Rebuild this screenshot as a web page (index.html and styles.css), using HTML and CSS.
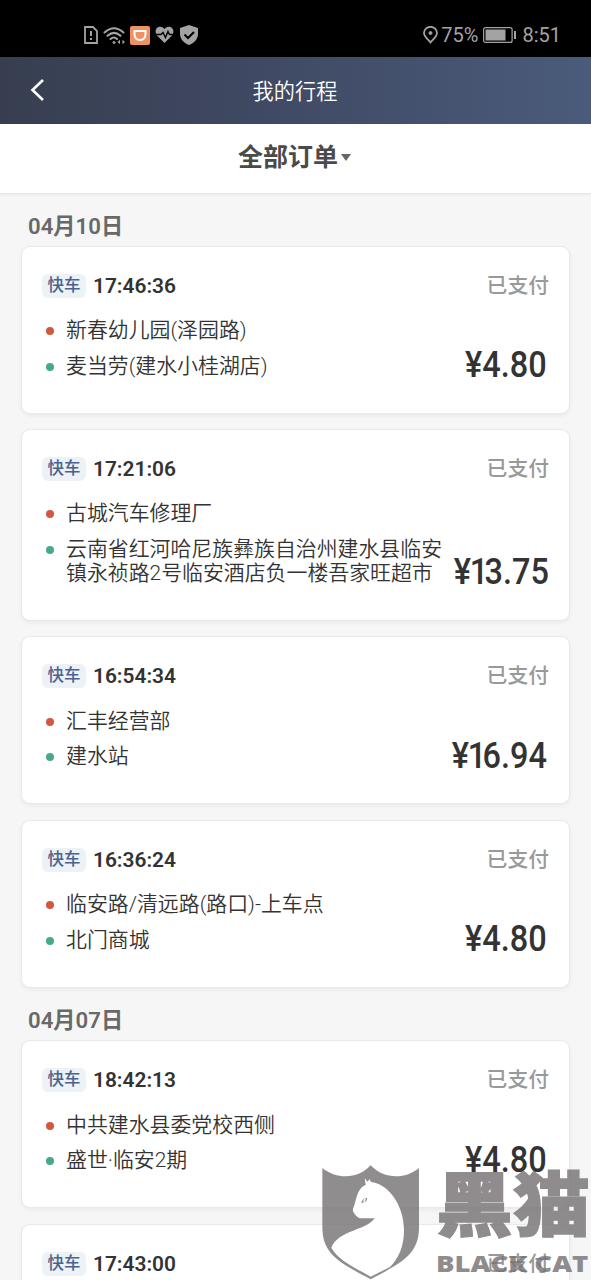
FILE: index.html
```
<!DOCTYPE html>
<html lang="zh-CN">
<head>
    <meta charset="UTF-8">
    <meta name="viewport" content="width=device-width, initial-scale=1.0">
    <title>我的行程</title>
    <link rel="stylesheet" href="styles.css">
</head>
<body>
    <div class="status-bar">
        <div class="status-left">
            <svg width="14" height="18" viewBox="0 0 14 18" fill="none" stroke="#a3a3a3" stroke-width="1.8"><path d="M1 1h8l4 4v12H1z"/><path d="M7 5v5M7 12v2" stroke-width="2"/></svg>
            <svg class="wifi" width="23" height="19" viewBox="0 0 23 19" fill="none" stroke="#a3a3a3" stroke-width="2" stroke-linecap="round"><path d="M1.500 6.500Q11-2 20.500 6.500M4.500 9.800Q11 4 17.500 9.800M7.500 13Q11 10 14 13"/><circle cx="11" cy="16.500" r="1" fill="#a3a3a3" stroke-width="1"/><path d="M14.500 16l2.500-2.300v4.600zM22 16l-2.500-2.300v4.600z" fill="#a3a3a3" stroke="none"/></svg>
            <svg class="didi" width="20" height="19" viewBox="0 0 20 19"><rect width="20" height="19" rx="2" fill="#f29160"/><path d="M4.500 5h11v2.500c0 4-2 6.500-5.500 6.500s-5.500-2.500-5.500-6.500z" fill="none" stroke="#fff" stroke-width="2"/></svg>
            <svg class="heart" width="19" height="18" viewBox="0 0 19 18"><path d="M9.500 17L2 9.500C-2.500 3 5-2.500 9.500 3 14-2.500 21.500 3 17 9.500z" fill="#a3a3a3"/><path d="M0 8.500h6l2-2 2.500 5 2.500-6 1.500 3H19" fill="none" stroke="#000" stroke-width="1.400"/></svg>
            <svg class="guard" width="18" height="20" viewBox="0 0 18 20"><path d="M9 0l9 3v6c0 5-4 9-9 11-5-2-9-6-9-11V3z" fill="#a3a3a3"/><path d="M4.500 9.500L8 13l6-6" fill="none" stroke="#000" stroke-width="2"/></svg>
        </div>
        <div class="status-right">
            <svg class="pin" width="15" height="18" viewBox="0 0 15 18" fill="none" stroke="#a3a3a3" stroke-width="1.800"><path d="M7.500 16.500C5 13.500 1 10.500 1 7a6.500 6.200 0 0 1 13 0c0 3.500-4 6.500-6.500 9.500z"/><circle cx="7.500" cy="7" r="1.500" fill="#a3a3a3" stroke-width="1"/></svg>
            <span class="percent">75%</span>
            <svg class="battery" width="34" height="16" viewBox="0 0 34 16"><rect x=".6" y=".6" width="28.500" height="14.800" rx="2" fill="none" stroke="#a3a3a3" stroke-width="1.200"/><rect x="2.500" y="2.500" width="20" height="11" fill="#a3a3a3"/><path d="M32 4v8" stroke="#a3a3a3" stroke-width="2"/></svg>
            <span class="clock">8:51</span>
        </div>
    </div>

    <div class="navbar">
        <svg class="back" width="15" height="22" viewBox="0 0 15 22" fill="none" stroke="#fff" stroke-width="2.600"><path d="M13 1L2.500 11 13 21"/></svg>
        <h1 class="title">我的行程</h1>
    </div>

    <div class="filter">
        <span>全部订单</span><i class="arrow"></i>
    </div>

    <div class="orders">
        <h2 class="date">04月10日</h2>

        <div class="card">
            <div class="card-head"><span class="tag">快车</span><span class="time">17:46:36</span><span class="state">已支付</span></div>
            <div class="card-body">
                <ul class="places">
                    <li class="from">新春幼儿园(泽园路)</li>
                    <li class="to">麦当劳(建水小桂湖店)</li>
                </ul>
                <div class="price">¥4.80</div>
            </div>
        </div>

        <div class="card">
            <div class="card-head"><span class="tag">快车</span><span class="time">17:21:06</span><span class="state">已支付</span></div>
            <div class="card-body">
                <ul class="places">
                    <li class="from">古城汽车修理厂</li>
                    <li class="to">云南省红河哈尼族彝族自治州建水县临安<br>镇永祯路2号临安酒店负一楼吾家旺超市</li>
                </ul>
                <div class="price">¥<span class="one">1</span>3.75</div>
            </div>
        </div>

        <div class="card">
            <div class="card-head"><span class="tag">快车</span><span class="time">16:54:34</span><span class="state">已支付</span></div>
            <div class="card-body">
                <ul class="places">
                    <li class="from">汇丰经营部</li>
                    <li class="to">建水站</li>
                </ul>
                <div class="price">¥<span class="one">1</span>6.94</div>
            </div>
        </div>

        <div class="card">
            <div class="card-head"><span class="tag">快车</span><span class="time">16:36:24</span><span class="state">已支付</span></div>
            <div class="card-body">
                <ul class="places">
                    <li class="from">临安路/清远路(路口)-上车点</li>
                    <li class="to">北门商城</li>
                </ul>
                <div class="price">¥4.80</div>
            </div>
        </div>

        <h2 class="date">04月07日</h2>

        <div class="card">
            <div class="card-head"><span class="tag">快车</span><span class="time">18:42:13</span><span class="state">已支付</span></div>
            <div class="card-body">
                <ul class="places">
                    <li class="from">中共建水县委党校西侧</li>
                    <li class="to">盛世·临安2期</li>
                </ul>
                <div class="price">¥4.80</div>
            </div>
        </div>

        <div class="card">
            <div class="card-head"><span class="tag">快车</span><span class="time">17:43:00</span><span class="state">已支付</span></div>
        </div>
    </div>

    <div class="watermark">
        <svg class="shield" width="98" height="115" viewBox="66 104 294 345">
            <path d="M67 113C110 148 175 147 212 105C250 147 315 148 357 113V290C357 370 310 395 212 447C115 395 67 370 67 290Z" fill="#787476" fill-opacity=".82"/>
            <path d="M194 143L202 154L209 147L213 155C262 160 312 220 312 300C312 350 295 385 270 410L212 439C165 412 115 390 94 352C115 300 200 300 224 264H180C170 260 156 245 159 235C168 220 168 175 197 164Z" fill="#fff"/>
            <path d="M184 218q3-15 17-16q2 14-17 16z" fill="#918e8f"/><path d="M195 204l-3 12" stroke="#fff" stroke-width="5"/>
        </svg>
        <div class="brand">
            <div class="brand-cn">黑猫</div>
            <div class="brand-en">BLACK CAT</div>
        </div>
    </div>
</body>
</html>
```
FILE: styles.css
```
* {
    box-sizing: border-box;
}

body {
    margin: 0;
    height: 1280px;
    overflow: hidden;
    position: relative;
    background: #f6f6f6;
    color: #333;
    font-family: Roboto, "Noto Sans CJK SC", sans-serif;
}

.status-bar {
    height: 57px;
    padding: 13px 30px 0 84px;
    display: flex;
    justify-content: space-between;
    align-items: center;
    background: #000;
    color: #a3a3a3;
    font-size: 20px;
}

.status-left,
.status-right {
    display: flex;
    align-items: center;
}

.wifi {
    margin-left: 5px;
}

.didi {
    margin-left: 4px;
}

.heart {
    margin-left: 5px;
}

.guard {
    margin-left: 6px;
}

.percent {
    margin-left: 3px;
}

.battery {
    margin: 0 5px;
}

.navbar {
    height: 67px;
    padding: 0 30px 2px;
    display: flex;
    align-items: center;
    background: linear-gradient(90deg, #373e50, #3f4861 40%, #4a5b7b);
    color: #fff;
}

.title {
    flex: 1;
    margin: 0 16px 0 0;
    text-align: center;
    font-size: 21.2px;
    font-weight: 350;
}

.filter {
    height: 70px;
    padding: 0 2px 7px 0;
    display: flex;
    justify-content: center;
    align-items: center;
    background: #fff;
    border-bottom: 1px solid #e9e9e9;
    box-shadow: 0 1px 3px rgba(0, 0, 0, 0.06);
    font-size: 25px;
    font-weight: 700;
    color: #4a4a4a;
}

.arrow {
    margin: 5px 0 0 3px;
    border: 5.5px solid transparent;
    border-top: 7px solid #666;
    border-bottom: 0;
}

.orders {
    padding: 0 21px;
}

.date {
    height: 37px;
    margin: 14.7px 0 0 7px;
    line-height: 35px;
    font-size: 22.2px;
    font-weight: 600;
    color: #686868;
}

.card {
    margin-bottom: 15.6px;
    padding: 27px 20px 34.1px;
    background: #fff;
    border: 1px solid #e9e9e9;
    border-radius: 9px;
    box-shadow: 0 2px 4px rgba(0, 0, 0, 0.05);
}

.card-head {
    height: 24px;
    display: flex;
    align-items: center;
}

.tag {
    width: 44px;
    height: 24px;
    border-radius: 6px;
    background: #edf2f7;
    text-align: center;
    line-height: 23px;
    font-size: 16.5px;
    font-weight: 500;
    color: #4a628f;
}

.time {
    margin-left: 7px;
    font-size: 20.9px;
    font-weight: 600;
}

.state {
    margin: -4px 0 0 auto;
    font-size: 20.8px;
    font-weight: 500;
    color: #999;
}

.card-body {
    margin-top: 21.3px;
    display: flex;
    justify-content: space-between;
    align-items: flex-end;
}

.places {
    margin: 0;
    padding: 0;
    list-style: none;
    font-size: 20.9px;
    font-weight: 350;
    line-height: 23.7px;
    white-space: nowrap;
}

.places li {
    display: flex;
    padding-left: 4px;
}

.places li + li {
    margin-top: 12.1px;
}

.places li::before {
    content: "";
    flex: none;
    width: 8px;
    height: 8px;
    margin: 8px 12px 0 0;
    border-radius: 50%;
    background: #d0583b;
}

.places .to::before {
    background: #45a98b;
}

.price {
    height: 36px;
    margin: 0 2px -4.5px 0;
    line-height: 36px;
    font-size: 36.5px;
    font-weight: 500;
    transform: scaleX(0.89);
    transform-origin: right;
}

.one {
    margin: 0 -4px 0 -1.5px;
}

/* logo in the corner, drawn over the list */
.watermark {
    position: absolute;
    left: 322px;
    top: 1165px;
    display: flex;
}

.brand {
    margin-left: 16px;
    color: #787476;
    opacity: 0.82;
}

.brand-cn {
    height: 84px;
    line-height: 84px;
    font-size: 77px;
    font-weight: 900;
    white-space: nowrap;
    -webkit-text-stroke: 1.5px #787476;
    transform: scaleY(0.92);
}

.brand-en {
    line-height: 28px;
    font-family: "Open Sans", sans-serif;
    font-size: 23px;
    font-weight: 800;
    white-space: nowrap;
    transform: scaleX(1.195);
    transform-origin: left;
    width: 126px;
}
```
